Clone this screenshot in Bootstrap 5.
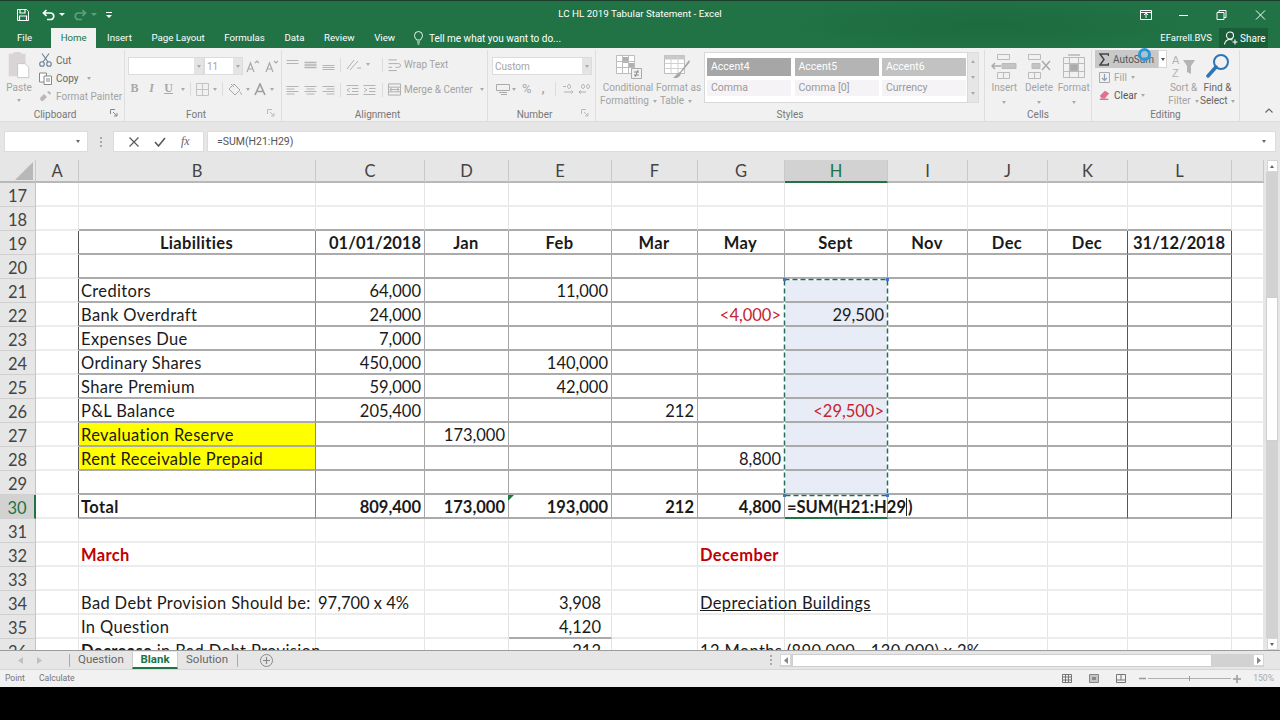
<!DOCTYPE html>
<html lang="en">
<head>
<meta charset="UTF-8" />
<title>LC HL 2019 Tabular Statement - Excel</title>
<link rel="stylesheet" href="https://cdn.jsdelivr.net/npm/bootstrap@5.3.3/dist/css/bootstrap.min.css" />
<style>
  body { background:#000; overflow:hidden; font-family:Roboto,sans-serif; font-size:10px; color:#666; line-height:1.3; white-space:nowrap; }
  svg { display:block; flex:none; }
  .xl-app { width:1280px; height:687px; background:#f1f1f1; }

  /* title bar + tabs */
  .xl-green { height:48px; color:#fff; background:#217346 radial-gradient(ellipse 240px 30px at 990px 24px,#1d6a3f,#217346); border-top:1px solid #1b3d2b; }
  .xl-title { height:27px; }
  .qat { width:480px; padding-left:17px; }
  .qat-undo { margin-left:13px; }
  .qat-redo { margin-left:9px; }
  .tri-w { margin-left:4px; border-top:3px solid #fff; border-left:3px solid transparent; border-right:3px solid transparent; }
  .tri-dim { opacity:.3; }
  .qat-more { margin-left:9px; }
  .doc-name { width:320px; font-size:9.8px; text-align:center; }
  .winbtns { width:480px; padding-left:340px; gap:26px; }
  .xl-tabs { height:20px; }
  .xl-tab { padding:0 9.8px; line-height:20px; font-size:9.7px; color:#fff; }
  .xl-tab-first { margin:0 19px 0 17px; padding:0; }
  .xl-tab-on { background:#f1f1f1; color:#217346; width:45px; padding:0; text-align:center; margin-right:1px; }
  .tell { margin-left:9px; gap:6px; }
  .acct { margin-left:auto; font-size:9.5px; margin-right:7px; }
  .share { height:20px; width:49px; margin-right:12px; background:#1a5e39; gap:2px; padding-left:5px; }

  /* ribbon */
  .xl-ribbon { height:74px; background:#f1f1f1; border-bottom:1px solid #dcdcdc; }
  .rb-grp { flex:none; border-right:1px solid #dedede; height:71px; margin-top:2px; }
  .rb-body { height:59px; }
  .rb-foot { height:12px; line-height:12px; color:#777; }
  .rb-foot span { flex:1; text-align:center; }
  .rb-launch { width:14px; }
  .g-clip { width:125px; } .g-font { width:157px; } .g-align { width:206px; }
  .g-num { width:108px; } .g-sty { width:389px; } .g-cells { width:107px; } .g-edit { width:148px; }
  .off { color:#a3a3a3; }
  .tri { display:inline-block; flex:none; margin-left:4px; border-top:3px solid #aaa; border-left:2.5px solid transparent; border-right:2.5px solid transparent; }
  .tri.up { transform:rotate(180deg); }
  .paste { width:38px; padding-top:1px; }
  .paste-label { margin-top:2px; line-height:13px; }
  .paste .tri { margin:5px 0 0; }
  .clip-list { margin-left:1px; padding-top:1px; }
  .clip-row { height:18px; gap:4px; }
  .font-top { padding:7px 0 0 3px; }
  .fbox { height:18px; background:#fff; border:1px solid #dcdcdc; }
  .fname { width:76px; }
  .fsize { width:39px; padding-left:2px; }
  .fspin { width:9px; height:16px; background:#e4e4e4; margin-left:auto; }
  .fspin .tri { margin:0; }
  .fgrow { margin-left:3px; gap:6px; }
  .font-low { padding-left:1px; margin-top:6px; height:16px; font-size:12px; font-family:"Liberation Serif",serif; font-weight:700; color:#a8a8a8; }
  .font-low b { flex:none; width:17px; text-align:center; }
  .sep { width:1px; height:14px; background:#dcdcdc; margin:0 5px; flex:none; }
  .al-col { padding:2px 0 0 4px; }
  .al-row { height:25px; gap:5px; }
  .al-row .sep { margin:0; }
  .al-mid { width:31px; }
  .al-wide { gap:3px; }
  .num-top { padding:7px 0 0 4px; }
  .nbox { width:100px; height:18px; padding-left:2px; background:#fff; border:1px solid #dcdcdc; }
  .num-low { padding-left:8px; margin-top:6px; height:16px; gap:2px; color:#a8a8a8; font-size:13px; }
  .num-low .tri { margin:0; }
  .num-low .sep { margin:0; }
  .big-btn { line-height:13px; text-align:center; }
  .b-cf { width:56px; margin-left:4px; }
  .b-ft { width:40px; }
  .big-btn svg { margin:4px auto 2px; }
  .big-btn .tri { vertical-align:middle; }
  .gallery { width:264px; height:51px; margin:2px 0 0 8px; background:#fff; border:1px solid #d8d8d8; padding:5px 2px; display:grid; grid-template-columns:repeat(3,84px); grid-template-rows:18px 16px; gap:4px 3.5px; }
  .gal-cell { padding-left:4px; line-height:18px; font-size:10.5px; color:#fff; }
  .gal-a4 { background:#a6a6a6; } .gal-a5 { background:#b4b4b4; } .gal-a6 { background:#c2c2c2; }
  .gal-plain { background:#f5f3f5; color:#999; line-height:16px; }
  .gal-arrows { width:11px; height:51px; margin-top:2px; background:#e6e6e6; border:1px solid #dcdcdc; border-left:0; }
  .gal-arrows i { flex:1; display:flex; align-items:center; justify-content:center; }
  .gal-arrows .tri { margin:0; }
  .cell-btn { width:35px; text-align:center; line-height:13px; }
  .cell-btn svg { margin:4px auto 2px; }
  .cell-btn .tri { margin:5px 0 0; }
  .cells-in { padding-left:2px; }
  .ed-list { width:75px; padding:0 0 0 3px; }
  .ed-sum { height:18px; color:#555; }
  .ed-sum-in { width:63px; height:18px; background:#c8c8c8; gap:4px; padding-left:4px; }
  .ed-drop { width:9px; height:18px; background:#fff; border:1px solid #d6d6d6; }
  .ed-drop .tri { margin:0; border-top-color:#555; }
  .ed-row { height:18px; gap:4px; padding-left:4px; }
  .ed-row-clear { color:#555; }
  .ed-big { width:35px; margin-left:-1px; line-height:13px; text-align:center; }
  .ed-big svg { margin:3px auto 2px; }
  .ed-big .tri { vertical-align:middle; }
  .rb-fold { width:39px; padding:60px 0 0 25px; }
  .busy-ring { position:absolute; left:1138px; top:48px; width:13px; height:13px; border-radius:50%; border:3px solid #2f96d6; background:rgba(150,190,215,.55); }

  /* formula bar */
  .xl-fbar { height:38px; padding:9px 4px 8px; background:#e6e6e6; }
  .name-box { width:84px; background:#fff; border:1px solid #dcdcdc; padding-right:7px; }
  .name-box .tri { margin:0 0 0 auto; border-top-color:#666; }
  .fdots { width:25px; }
  .fx-btns { width:91px; background:#fff; border:1px solid #dcdcdc; justify-content:space-around; padding:0 6px 0 8px; }
  .fx-mark { font-family:"Liberation Serif",serif; font-style:italic; font-size:12px; color:#666; }
  .fx-input { width:1069px; margin-left:3px; padding:0 9px; background:#fff; border:1px solid #dcdcdc; font-size:10.5px; color:#555; line-height:19px; }
  .fx-input .tri { margin:0 0 0 auto; border-top-color:#666; }

  /* sheet */
  .xl-main { height:490px; }
  .sheet-wrap { position:relative; width:1264px; height:490px; overflow:hidden; background:#fff; }
  .xl-sheet { width:1264px; table-layout:fixed; border-collapse:separate; border-spacing:0; font-family:Lato,sans-serif; font-size:16.5px; line-height:19px; color:#1a1a1a; }
  .xl-sheet th { height:23px; padding:2px 0 0; text-align:center; font-weight:400; color:#444; background:#e6e6e6; border-right:1px solid #c9c9c9; border-bottom:2px solid #b8b8b8; }
  .xl-sheet tbody th { height:24px; padding-top:3px; border-right:1px solid #c4c4c4; border-bottom:1px solid #cfcfcf; }
  .xl-sheet td { height:24px; padding:3px 3px 0 2px; letter-spacing:.35px; white-space:nowrap; overflow:visible; border-right:1px solid #e4e4e4; border-bottom:2px solid #ececec; }
  .xl-sheet th.corner { padding-top:0; }
  .corner svg { margin-left:15px; }
  .xl-sheet th.hit { background:#d2d2d2; color:#217346; }
  .xl-sheet thead th.hit { border-bottom-color:#217346; }
  .xl-sheet tbody th.hit { border-right:2px solid #217346; }
  .xl-sheet td.box { border-right:1px solid #a6a6a6; border-bottom:2px solid #ababab; }
  .xl-sheet td.rule-dark { border-right:1px solid #555; }
  .xl-sheet td.rule-mid { border-right:1px solid #888; }
  .xl-sheet td.rule-under { border-bottom:2px solid #ababab; }
  .xl-sheet td.num, .xl-sheet td.num-acc, .xl-sheet td.dgt, .xl-sheet td.edit-cell { letter-spacing:0; }
  .num { text-align:right; }
  .num-acc { text-align:right; padding-right:10px !important; }
  .ctr { text-align:center; }
  .red { color:#c00000; }
  .neg { color:#c5242f; }
  .hl { background:#ffff00; }
  .sel { background:#e8ecf7; }
  .uline { text-decoration:underline; }
  .edit-caret { display:inline-block; width:1px; height:18px; margin:0 .5px; vertical-align:-3px; background:#222; }
  .xl-sheet td.edit-cell { border-bottom:2px solid #217346; }
  .ants { position:absolute; left:782px; top:117px; pointer-events:none; }
  .err-flag { position:absolute; left:508px; top:335px; }

  .vscroll { width:16px; padding:0 2px; background:#e6e6e6; }
  .vs-btn { width:11px; height:12px; background:#fff; border:1px solid #d6d6d6; }
  .vs-btn .tri { margin:0; border-top-color:#666; }
  .vs-track { flex:1; background:#d2d2d2; }
  .vs-thumb { margin-top:125px; height:144px; background:#fff; border:1px solid #cfcfcf; }

  /* sheet tabs + status */
  .xl-tabbar { height:19px; background:#e6e6e6; border-top:1px solid #9c9c9c; }
  .sh-nav { width:69px; padding-left:18px; gap:14px; }
  .tab-div { width:1px; height:13px; background:#aaa; }
  .sh-tab { padding:0 5px; line-height:14px; height:17px; color:#666; font-size:11.5px; }
  .sh-q { margin:0 4px 0 3px; width:55px; }
  .sh-on { width:46px; background:#fff; color:#217346; font-weight:700; border-bottom:2px solid #217346; border-left:1px solid #ccc; border-right:1px solid #ccc; padding:0; text-align:center; }
  .sh-s { margin:0 4px 0 3px; width:52px; }
  .sh-add { margin-left:22px; }
  .hs-arrow { width:11px; height:12px; background:#fff; border:1px solid #d6d6d6; }
  .hs-track { margin-left:8px; margin-right:16px; width:484px; height:13px; background:#d2d2d2; }
  .hs-thumb { width:420px; height:13px; margin-left:1px; background:#fff; border:1px solid #cfcfcf; }
  .hs-grip { margin-left:auto; color:#999; }
  .xl-status { height:18px; background:#f1f1f1; border-top:1px solid #d6d6d6; padding-left:5px; font-size:8.6px; line-height:1; color:#777; }
  .st-calc { margin-left:14px; }
  .st-right { margin-left:auto; gap:13px; padding-right:6px; }
  .st-zoom { gap:2px; }
  .zoom-line { width:83px; height:1px; background:#b0b0b0; padding-left:41px; }
  .zoom-tick { width:1px; height:5px; margin-top:-2px; background:#999; }
  .pct { color:#aaa; margin-left:-1px; }
</style>
</head>
<body>
<div class="xl-app d-flex flex-column">
  <header class="xl-green">
    <div class="xl-title d-flex align-items-center">
      <div class="qat d-flex align-items-center">
        <svg width="12" height="12" viewBox="0 0 12 12" fill="none" stroke="#fff"><path d="M.5.5h9l2 2v9H.5z"/><path d="M3 .5v3.5h5V.5M2.500 11.500V7h7v4.500" stroke-width="1.200"/></svg>
        <svg class="qat-undo" width="13" height="12" viewBox="0 0 13 12" fill="none" stroke="#fff" stroke-width="1.700"><path d="M4.500 1 1.500 4l3 3M2 4h6.500a3.200 3.200 0 0 1 0 6.500H5"/></svg>
        <span class="tri-w"></span>
        <svg class="qat-redo tri-dim" width="13" height="12" viewBox="0 0 13 12" fill="none" stroke="#fff" stroke-width="1.700"><path d="M8.500 1l3 3-3 3M11 4H4.500a3.200 3.200 0 0 0 0 6.500H8"/></svg>
        <span class="tri-w tri-dim"></span>
        <svg class="qat-more" width="6" height="7" viewBox="0 0 6 7" fill="#fff"><path d="M0 1h6v1H0zM0 4h6L3 7z"/></svg>
      </div>
      <div class="doc-name">LC HL 2019 Tabular Statement - Excel</div>
      <div class="winbtns d-flex align-items-center">
        <svg width="12" height="10" viewBox="0 0 12 10" fill="none" stroke="#fff"><path d="M.5.500h11v9H.5zM6 8V3M4 5l2-2 2 2M.5 2.500h11"/></svg>
        <svg width="12" height="10" viewBox="0 0 12 10" stroke="#fff"><path d="M1 5.500h9"/></svg>
        <svg width="12" height="10" viewBox="0 0 12 10" fill="none" stroke="#fff"><path d="M1 2.500h7v7H1zM3 2.500V.5h7v7H8"/></svg>
        <svg width="12" height="10" viewBox="0 0 12 10" fill="none" stroke="#fff"><path d="M2 .5l9 9M11 .5l-9 9"/></svg>
      </div>
    </div>
    <nav class="xl-tabs nav flex-nowrap align-items-stretch">
      <span class="xl-tab xl-tab-first">File</span>
      <span class="xl-tab xl-tab-on">Home</span>
      <span class="xl-tab">Insert</span>
      <span class="xl-tab">Page Layout</span>
      <span class="xl-tab">Formulas</span>
      <span class="xl-tab">Data</span>
      <span class="xl-tab">Review</span>
      <span class="xl-tab">View</span>
      <span class="tell d-flex align-items-center">
        <svg width="9" height="14" viewBox="0 0 9 14" fill="none" stroke="#fff" stroke-width=".9"><path d="M2.500 9C2.200 7.500.5 6.800.5 4.500a4 4 0 0 1 8 0C8.500 6.800 6.800 7.500 6.500 9zM3 11h3M3.500 13h2"/></svg>
        Tell me what you want to do...
      </span>
      <span class="acct d-flex align-items-center">EFarrell.BVS</span>
      <span class="share d-flex align-items-center">
        <svg width="14" height="14" viewBox="0 0 14 14" fill="none" stroke="#fff" stroke-width="1.100"><circle cx="6" cy="4.500" r="3.500"/><path d="M.5 13.500C1 10 3 8.500 6 8.500c1 0 2 .2 2.500.5M11 8.500v5M8.500 11h5"/></svg>
        Share
      </span>
    </nav>
  </header>

  <section class="xl-ribbon d-flex">
    <div class="rb-grp g-clip">
      <div class="rb-body d-flex">
        <div class="paste d-flex flex-column align-items-center off">
          <svg width="24" height="28" viewBox="0 0 24 30"><path fill="#d9d4d6" d="M1 3h4l2-2h6l2 2h4v24H1z"/><path fill="#fff" stroke="#c6c6c6" d="M10.500 13.500h8l4 4v11h-12z"/></svg>
          <div class="paste-label">Paste</div>
          <span class="tri"></span>
        </div>
        <div class="clip-list">
          <div class="clip-row d-flex align-items-center">
            <svg width="13" height="14" viewBox="0 0 13 14" fill="none" stroke="#6b7f96" stroke-width="1.100"><path d="M3 .5l6 8.500M10 .5L4 9"/><circle cx="3" cy="11" r="2.300"/><circle cx="10" cy="11" r="2.300"/></svg>
            Cut
          </div>
          <div class="clip-row d-flex align-items-center">
            <svg width="13" height="13" viewBox="0 0 13 13" fill="#fff" stroke="#888"><path d="M.5 1h7v9h-7z"/><path d="M5 4h7.500v8.500H5zM7 7h4M7 9h4"/></svg>
            Copy<span class="tri"></span>
          </div>
          <div class="clip-row d-flex align-items-center off">
            <svg width="13" height="12" viewBox="0 0 13 12" fill="#b8b8b8"><path d="M1 8l4-4 3 3-4 4H2zM8 2l2-1 2 2-1 2z"/></svg>
            Format Painter
          </div>
        </div>
      </div>
      <div class="rb-foot d-flex"><span>Clipboard</span><div class="rb-launch"><svg width="8" height="8" viewBox="0 0 8 8" fill="none" stroke="#888"><path d="M.5 5V.5H5M3 3l4 4M4 7h3V4"/></svg></div></div>
    </div>

    <div class="rb-grp g-font">
      <div class="rb-body">
        <div class="font-top d-flex">
          <div class="fbox fname d-flex align-items-center"><span class="fspin d-flex align-items-center justify-content-center"><span class="tri"></span></span></div>
          <div class="fbox fsize d-flex align-items-center off">11<span class="fspin d-flex align-items-center justify-content-center"><span class="tri"></span></span></div>
          <div class="fgrow d-flex align-items-center off">
            <svg width="13" height="13" viewBox="0 0 13 13" fill="none" stroke="#a8a8a8" stroke-width="1.200"><path d="M1 12L4.500 3 8 12M2.300 9h4.400M9 3l2-2 2 2"/></svg>
            <svg width="13" height="13" viewBox="0 0 13 13" fill="none" stroke="#a8a8a8" stroke-width="1.200"><path d="M1 12L4.500 3 8 12M2.300 9h4.400M9 1l2 2 2-2"/></svg>
          </div>
        </div>
        <div class="font-low d-flex align-items-center">
          <b>B</b><b><i>I</i></b><b class="text-decoration-underline">U</b><span class="tri"></span>
          <span class="sep"></span>
          <svg width="13" height="13" viewBox="0 0 13 13" fill="none" stroke="#c4c4c4"><path d="M.5.5h12v12H.5zM.5 6.500h12M6.500.5v12"/></svg><span class="tri"></span>
          <span class="sep"></span>
          <svg width="14" height="13" viewBox="0 0 14 13" fill="none" stroke="#a8a8a8"><path d="M6 1l6 6-5 5-6-6zM3 1l3 3M12 9c1 1.500 1.500 2 1.500 3"/></svg><span class="tri"></span>
          <svg class="ms-1" width="12" height="13" viewBox="0 0 12 13" fill="none" stroke="#a0a0a0" stroke-width="1.700"><path d="M1 12L6 1l5 11M2.800 8.500h6.400"/></svg><span class="tri"></span>
        </div>
      </div>
      <div class="rb-foot d-flex"><span>Font</span><div class="rb-launch"><svg width="8" height="8" viewBox="0 0 8 8" fill="none" stroke="#bbb"><path d="M.5 5V.5H5M3 3l4 4M4 7h3V4"/></svg></div></div>
    </div>

    <div class="rb-grp g-align">
      <div class="rb-body al-col off">
        <div class="al-row d-flex align-items-center">
          <svg width="13" height="12" viewBox="0 0 13 12" stroke="#b4b4b4"><path d="M.5 1.500h12M.5 4.500h12"/></svg>
          <svg width="13" height="12" viewBox="0 0 13 12" stroke="#b4b4b4" stroke-width="1.500"><path d="M.5 3.500h12M.5 6h12M.5 8.500h12"/></svg>
          <svg width="13" height="12" viewBox="0 0 13 12" stroke="#b4b4b4"><path d="M.5 6.500h12M.5 8.500h12M.5 10.500h12"/></svg>
          <span class="sep"></span>
          <span class="al-mid d-flex align-items-center">
            <svg width="16" height="13" viewBox="0 0 16 13" fill="none" stroke="#b0b0b0"><path d="M1 11L8 2M4 12l8-9M11 10h4"/></svg><span class="tri"></span>
          </span>
          <span class="sep"></span>
          <span class="al-wide d-flex align-items-center">
            <svg width="13" height="14" viewBox="0 0 14 14" fill="none" stroke="#aaa"><path d="M.5 1.500h9M.5 5.500h11a2 2 0 0 1 0 4H8M.5 9.500h4M.5 13h9"/></svg>
            Wrap Text
          </span>
        </div>
        <div class="al-row d-flex align-items-center">
          <svg width="13" height="12" viewBox="0 0 13 12" stroke="#b4b4b4"><path d="M.5 2.500h12M.5 5h8M.5 7.500h12M.5 10h8"/></svg>
          <svg width="13" height="12" viewBox="0 0 13 12" stroke="#b4b4b4"><path d="M.5 2.500h12M2.500 5h8M.5 7.500h12M2.500 10h8"/></svg>
          <svg width="13" height="12" viewBox="0 0 13 12" stroke="#b4b4b4"><path d="M.5 2.500h12M4.500 5h8M.5 7.500h12M4.500 10h8"/></svg>
          <span class="sep"></span>
          <span class="al-mid d-flex align-items-center gap-1">
            <svg width="13" height="12" viewBox="0 0 13 12" fill="none" stroke="#b4b4b4"><path d="M.5 1.500h12M6 4.500h6.500M6 7.500h6.500M.5 10.500h12M4 4L1 6l3 2"/></svg>
            <svg width="13" height="12" viewBox="0 0 13 12" fill="none" stroke="#b4b4b4"><path d="M.5 1.500h12M6 4.500h6.500M6 7.500h6.500M.5 10.500h12M1 4l3 2-3 2"/></svg>
          </span>
          <span class="sep"></span>
          <span class="al-wide d-flex align-items-center">
            <svg width="13" height="13" viewBox="0 0 14 13" fill="none" stroke="#aaa"><path d="M.5.500h13v12H.5zM.5 4h13M.5 9h13M2 6.500h10M4 5L2 6.500 4 8M10 5l2 1.500L10 8"/></svg>
            Merge &amp; Center<span class="tri"></span>
          </span>
        </div>
      </div>
      <div class="rb-foot d-flex"><span>Alignment</span><div class="rb-launch"></div></div>
    </div>

    <div class="rb-grp g-num">
      <div class="rb-body">
        <div class="num-top"><div class="nbox d-flex align-items-center off">Custom<span class="fspin d-flex align-items-center justify-content-center"><span class="tri"></span></span></div></div>
        <div class="num-low d-flex align-items-center">
          <svg width="14" height="12" viewBox="0 0 14 12" fill="none" stroke="#aaa"><path d="M.5 1.500h13v6H.5z"/><path d="M3 9.500h8M5 11.500h6"/></svg><span class="tri"></span>
          <span class="ms-1">%</span><span class="ms-2 fw-bold">,</span>
          <span class="sep ms-2"></span>
          <svg class="ms-1" width="13" height="12" viewBox="0 0 13 12" fill="none" stroke="#a8a8a8" stroke-width=".9"><path d="M1 3.500h3M7 1.500a1.500 2 0 1 0 .1 0zM2 9h7M9 7.500L11 9l-2 1.500"/></svg>
          <svg width="13" height="12" viewBox="0 0 13 12" fill="none" stroke="#a8a8a8" stroke-width=".9"><path d="M6 1.500a1.500 2 0 1 0 .1 0zM11 1.500a1.500 2 0 1 0 .1 0zM2 9h7M4 7.500L2 9l2 1.500"/></svg>
        </div>
      </div>
      <div class="rb-foot d-flex"><span>Number</span><div class="rb-launch"><svg width="8" height="8" viewBox="0 0 8 8" fill="none" stroke="#bbb"><path d="M.5 5V.5H5M3 3l4 4M4 7h3V4"/></svg></div></div>
    </div>

    <div class="rb-grp g-sty">
      <div class="rb-body d-flex">
        <div class="big-btn b-cf off">
          <svg width="27" height="25" viewBox="0 0 27 25"><path fill="#fff" stroke="#bdbdbd" d="M1.500 1.500h18v18h-18z"/><path fill="#b0b0b0" d="M7 3h7v6H7zM13 9h6v4h-6z"/><path stroke="#bdbdbd" fill="none" d="M1.500 7.500h18M1.500 13.500h18M7.500 1.500v18M13.500 1.500v18"/><path fill="#f1f1f1" stroke="#aaa" d="M16.500 14.500h10v10h-10z"/><path stroke="#888" d="M19 18h5M19 21h5M23 16l-3 7"/></svg>
          Conditional<br />Formatting<span class="tri"></span>
        </div>
        <div class="big-btn b-ft off">
          <svg width="27" height="25" viewBox="0 0 27 25"><path fill="#fff" stroke="#bdbdbd" d="M1.500 1.500h20v18h-20z"/><path fill="#c8c8c8" d="M1.500 1.500h20v4h-20z"/><path stroke="#d0d0d0" fill="none" d="M1.500 9.500h20M1.500 14.500h20M8 1.500v18M15 1.500v18"/><path fill="#a8a8a8" d="M26 6L17 18l-2 1-5 5 4 0 3-2 1-3 9-11z"/></svg>
          Format as<br />Table<span class="tri"></span>
        </div>
        <div class="gallery">
          <div class="gal-cell gal-a4">Accent4</div>
          <div class="gal-cell gal-a5">Accent5</div>
          <div class="gal-cell gal-a6">Accent6</div>
          <div class="gal-cell gal-plain">Comma</div>
          <div class="gal-cell gal-plain">Comma [0]</div>
          <div class="gal-cell gal-plain">Currency</div>
        </div>
        <div class="gal-arrows d-flex flex-column">
          <i><span class="tri up"></span></i>
          <i><span class="tri"></span></i>
          <i><span class="tri"></span></i>
        </div>
      </div>
      <div class="rb-foot d-flex"><span>Styles</span></div>
    </div>

    <div class="rb-grp g-cells">
      <div class="rb-body cells-in d-flex off">
        <div class="cell-btn">
          <svg width="26" height="25" viewBox="0 0 26 25" fill="none" stroke="#bbb"><path d="M6.500.5h12v5h-12zM6.500 18.500h12v6h-12zM12.500 18.500v6"/><path fill="#c4c4c4" d="M11 9.500h14v5H11z"/><path d="M1 12h9M4 9l-3 3 3 3" stroke="#aaa" stroke-width="1.500"/></svg>
          Insert<br /><span class="tri"></span>
        </div>
        <div class="cell-btn">
          <svg width="26" height="25" viewBox="0 0 26 25" fill="none" stroke="#bbb"><path d="M2.500.5h12v5h-12zM2.500 18.500h12v6h-12zM8.500 18.500v6"/><path fill="#c4c4c4" d="M6 9.500h8v5H6z"/><path d="M16 7l8 9M24 7l-8 9" stroke="#aaa" stroke-width="1.500"/></svg>
          Delete<br /><span class="tri"></span>
        </div>
        <div class="cell-btn">
          <svg width="26" height="25" viewBox="0 0 26 25" fill="none" stroke="#bbb"><path d="M2.500 3.500h21v20h-21zM8.500 3.500v20M17.500 3.500v20M2.500 9.500h21M2.500 17.500h21"/><path fill="#aaa" d="M9 10h8v7H9z"/><path d="M7 1h12" stroke="#999"/></svg>
          Format<br /><span class="tri"></span>
        </div>
      </div>
      <div class="rb-foot d-flex"><span>Cells</span></div>
    </div>

    <div class="rb-grp g-edit">
      <div class="rb-body d-flex">
        <div class="ed-list">
          <div class="ed-sum d-flex">
            <div class="ed-sum-in d-flex align-items-center">
              <svg width="10" height="13" viewBox="0 0 10 13" fill="none" stroke="#444" stroke-width="1.500"><path d="M9.500 3V1H1l4 5.500L1 12h8.500v-2"/></svg>
              AutoSum
            </div>
            <div class="ed-drop d-flex align-items-center justify-content-center"><span class="tri"></span></div>
          </div>
          <div class="ed-row d-flex align-items-center off">
            <svg width="11" height="11" viewBox="0 0 11 11" fill="none" stroke="#aaa"><path d="M.5.500h10v10H.5z"/><path d="M5.500 2v6M3 6l2.500 2.500L8 6" stroke="#8aa0b8" stroke-width="1.200"/></svg>
            Fill<span class="tri m-0"></span>
          </div>
          <div class="ed-row ed-row-clear d-flex align-items-center">
            <svg width="11" height="12" viewBox="0 0 13 12"><path fill="#e2708f" d="M1 7l6-6 5 3-5 6H3z"/><path stroke="#b0304c" fill="none" d="M1 11h10"/></svg>
            Clear<span class="tri m-0"></span>
          </div>
        </div>
        <div class="ed-big off">
          <svg width="24" height="26" viewBox="0 0 24 26" fill="none"><text x="0" y="11" font-family="Liberation Sans" font-size="11" fill="#b4b4b4">A</text><text x="0" y="24" font-family="Liberation Sans" font-size="11" fill="#b4b4b4">Z</text><path fill="#b4b4b4" d="M11 7h12l-4 6v8l-4-2v-6z"/></svg>
          Sort &amp;<br />Filter<span class="tri"></span>
        </div>
        <div class="ed-big">
          <svg width="24" height="26" viewBox="0 0 24 26" fill="none"><circle cx="15" cy="9" r="7" stroke="#2e75b6" stroke-width="2"/><path d="M10 14L2 23" stroke="#2e75b6" stroke-width="3.500" stroke-linecap="round"/></svg>
          Find &amp;<br />Select<span class="tri"></span>
        </div>
      </div>
      <div class="rb-foot d-flex"><span>Editing</span></div>
    </div>

    <div class="rb-fold"><svg width="8" height="5" viewBox="0 0 8 5" fill="none" stroke="#666" stroke-width="1.200"><path d="M.5 4.500L4 1l3.500 3.500"/></svg></div>
  </section>
  <div class="busy-ring"></div>

  <div class="xl-fbar d-flex">
    <div class="name-box d-flex align-items-center"><span class="tri"></span></div>
    <div class="fdots d-flex align-items-center justify-content-center"><svg width="2" height="10" viewBox="0 0 2 10" fill="#aaa"><path d="M0 0h2v2H0zM0 4h2v2H0zM0 8h2v2H0z"/></svg></div>
    <div class="fx-btns d-flex align-items-center">
      <svg width="10" height="10" viewBox="0 0 10 10" fill="none" stroke="#555" stroke-width="1.100"><path d="M.5.500l9 9M9.500.500l-9 9"/></svg>
      <svg width="12" height="10" viewBox="0 0 12 10" fill="none" stroke="#555" stroke-width="1.500"><path d="M1 5l3.500 4L11 1"/></svg>
      <span class="fx-mark">fx</span>
    </div>
    <div class="fx-input d-flex align-items-center">=SUM(H21:H29)<span class="tri"></span></div>
  </div>

  <main class="xl-main d-flex">
    <div class="sheet-wrap">
      <table class="xl-sheet">
        <colgroup id="sheetCols"></colgroup>
        <thead id="sheetHead"></thead>
        <tbody id="sheetBody"></tbody>
      </table>
      <svg class="ants" width="108" height="221" viewBox="0 0 108 221" fill="none">
        <rect x="2.500" y="2.500" width="103" height="216" stroke="#fff" stroke-width="1.500"/>
        <rect x="2.500" y="2.500" width="103" height="216" stroke="#1f6f5a" stroke-width="1.500" stroke-dasharray="5 3"/>
        <g fill="#4472c4"><rect x="1" y="1" width="3" height="3"/><rect x="104" y="1" width="3" height="3"/><rect x="1" y="217" width="3" height="3"/><rect x="104" y="217" width="3" height="3"/></g>
      </svg>
      <svg class="err-flag" width="6" height="6" viewBox="0 0 6 6" fill="#1e7a3e"><path d="M0 0h6L0 6z"/></svg>
    </div>
    <div class="vscroll d-flex flex-column align-items-center">
      <div class="vs-btn d-flex align-items-center justify-content-center"><span class="tri up"></span></div>
      <div class="vs-track w-100"><div class="vs-thumb"></div></div>
      <div class="vs-btn d-flex align-items-center justify-content-center"><span class="tri"></span></div>
    </div>
  </main>

  <div class="xl-tabbar d-flex align-items-center">
    <div class="sh-nav d-flex align-items-center">
      <svg width="5" height="7" viewBox="0 0 5 7" fill="#c0c0c0"><path d="M5 0v7L0 3.500z"/></svg>
      <svg width="5" height="7" viewBox="0 0 5 7" fill="#c0c0c0"><path d="M0 0v7l5-3.500z"/></svg>
    </div>
    <span class="tab-div"></span>
    <span class="sh-tab sh-q">Question</span>
    <span class="sh-tab sh-on">Blank</span>
    <span class="sh-tab sh-s">Solution</span>
    <span class="tab-div"></span>
    <svg class="sh-add" width="13" height="13" viewBox="0 0 13 13" fill="none" stroke="#888"><circle cx="6.500" cy="6.500" r="6"/><path d="M6.500 3v7M3 6.500h7" stroke-width="1.200"/></svg>
    <div class="hs-grip d-flex align-items-center"><svg width="2" height="10" viewBox="0 0 2 10" fill="#aaa"><path d="M0 0h2v2H0zM0 4h2v2H0zM0 8h2v2H0z"/></svg></div>
    <div class="hs-track d-flex align-items-center">
      <div class="hs-arrow d-flex align-items-center justify-content-center"><svg width="4" height="7" viewBox="0 0 4 7" fill="#888"><path d="M4 0v7L0 3.500z"/></svg></div>
      <div class="hs-thumb"></div>
      <div class="ms-auto hs-arrow d-flex align-items-center justify-content-center"><svg width="4" height="7" viewBox="0 0 4 7" fill="#888"><path d="M0 0v7l4-3.500z"/></svg></div>
    </div>
  </div>

  <footer class="xl-status d-flex align-items-center">
    <span>Point</span><span class="st-calc">Calculate</span>
    <div class="st-right d-flex align-items-center">
      <svg width="10" height="9" viewBox="0 0 10 9" fill="none" stroke="#777"><path d="M.5.500h9v8h-9zM.5 3h9M.5 6h9M3.500.5v8M6.500.5v8"/></svg>
      <svg class="ms-1" width="10" height="9" viewBox="0 0 10 9"><path fill="#c4c4c4" stroke="#888" d="M.5.500h9v8h-9z"/><path fill="#888" d="M3 3h4v3H3z"/></svg>
      <svg class="ms-1" width="10" height="9" viewBox="0 0 10 9" fill="none" stroke="#777"><path d="M.5.500h9v8h-9zM.5 6h9M5 .5V6"/></svg>
      <div class="st-zoom d-flex align-items-center">
        <svg width="7" height="7" viewBox="0 0 7 7" stroke="#999" stroke-width="1.500"><path d="M0 3.500h7"/></svg>
        <div class="zoom-line"><div class="zoom-tick"></div></div>
        <svg width="8" height="8" viewBox="0 0 8 8" stroke="#999" stroke-width="1.500"><path d="M0 4h8M4 0v8"/></svg>
      </div>
      <span class="pct">150%</span>
    </div>
  </footer>
</div>

<script>
  const widths = [36, 43, 237, 109, 84, 103, 86, 87, 103, 80, 80, 80, 104, 32];
  const letters = ["", "A", "B", "C", "D", "E", "F", "G", "H", "I", "J", "K", "L", ""];

  // sheet content, keyed by row then column
  const sheet = {
    19: { B: "Liabilities|b ctr", C: "01/01/2018|b num", D: "Jan|b ctr", E: "Feb|b ctr", F: "Mar|b ctr", G: "May|b ctr", H: "Sept|b ctr", I: "Nov|b ctr", J: "Dec|b ctr", K: "Dec|b ctr", L: "31/12/2018|b ctr dgt" },
    21: { B: "Creditors", C: "64,000|num", E: "11,000|num" },
    22: { B: "Bank Overdraft", C: "24,000|num", G: "&lt;4,000&gt;|num neg", H: "29,500|num" },
    23: { B: "Expenses Due", C: "7,000|num" },
    24: { B: "Ordinary Shares", C: "450,000|num", E: "140,000|num" },
    25: { B: "Share Premium", C: "59,000|num", E: "42,000|num" },
    26: { B: "P&amp;L Balance", C: "205,400|num", F: "212|num", H: "&lt;29,500&gt;|num neg" },
    27: { B: "Revaluation Reserve|hl", D: "173,000|num" },
    28: { B: "Rent Receivable Prepaid|hl", G: "8,800|num" },
    30: { B: "Total|b", C: "809,400|b num", D: "173,000|b num", E: "193,000|b num", F: "212|b num", G: "4,800|b num" },
    32: { B: "March|b red", G: "December|b red" },
    34: { B: "Bad Debt Provision Should be:", C: "97,700 x 4%|dgt", E: "3,908|num-acc", G: "Depreciation Buildings|uline" },
    35: { B: "In Question", E: "4,120|num-acc rule-under" },
    36: { B: "<b>Decrease</b> in Bad Debt Provision", E: "212|num-acc", G: "12 Months (890,000 - 130,000) x 2%" },
  };

  document.querySelector("#sheetCols").innerHTML = widths.map((w) => `<col width="${w}">`).join("");

  document.querySelector("#sheetHead").innerHTML =
    "<tr>" +
    letters.map((l, i) => {
      if (i === 0) return `<th class="corner"><svg width="18" height="18" viewBox="0 0 18 18" fill="#b8b8b8"><path d="M18 0v18H0z"/></svg></th>`;
      return `<th class="${l === "H" ? "hit" : ""}">${l}</th>`;
    }).join("") +
    "</tr>";

  let rowsHtml = "";
  for (let r = 17; r <= 36; r++) {
    rowsHtml += `<tr><th class="${r === 30 ? "hit" : ""}">${r}</th>`;
    letters.slice(1).forEach((col, i) => {
      const inBox = r >= 19 && r <= 30 && i >= 1 && i <= 11;
      const above = r === 18 && i >= 1 && i <= 11;
      const raw = col && sheet[r] && sheet[r][col] ? sheet[r][col] : "";
      let [text, cls] = raw.split("|");
      const classes = [(cls || "").replace(/\bb\b/, "fw-bold")];
      if (inBox) classes.push("box");
      if (above) classes.push("rule-under");
      if (r >= 19 && r <= 30 && (i === 0 || i === 10 || i === 11)) classes.push("rule-dark");
      if (r >= 19 && r <= 30 && i === 1) classes.push("rule-mid");
      if (col === "H" && r >= 21 && r <= 29) classes.push("sel");
      if (col === "H" && r === 30) {
        classes.push("edit-cell", "fw-bold");
        text = '=SUM(H21:H29<span class="edit-caret"></span>)';
      }
      rowsHtml += `<td class="${classes.join(" ")}">${text || ""}</td>`;
    });
    rowsHtml += "</tr>";
  }
  document.querySelector("#sheetBody").innerHTML = rowsHtml;
</script>
<script src="https://cdn.jsdelivr.net/npm/bootstrap@5.3.3/dist/js/bootstrap.bundle.min.js"></script>
</body>
</html>
